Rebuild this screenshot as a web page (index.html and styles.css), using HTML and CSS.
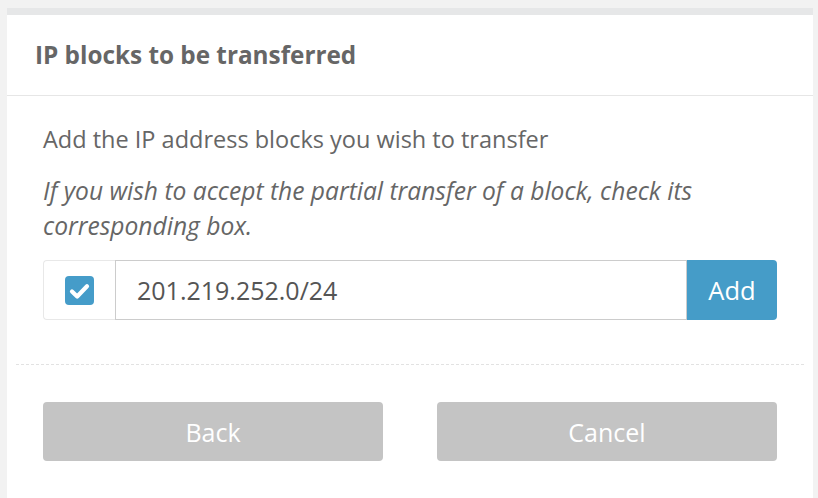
FILE: index.html
```html
<!DOCTYPE html>
<html lang="en">
<head>
<meta charset="utf-8">
<title>IP blocks to be transferred</title>
<link rel="stylesheet" href="styles.css">
</head>
<body>
<div class="page">
  <div class="card">
    <div class="card-header">
      <h2 class="title">IP blocks to be transferred</h2>
    </div>
    <div class="card-body">
      <p class="lead">Add the IP address blocks you wish to transfer</p>
      <p class="hint">If you wish to accept the partial transfer of a block, check its corresponding box.</p>
      <div class="input-group">
        <span class="addon">
          <span class="check">
            <svg viewBox="0 0 29 29" width="29" height="29"><path d="M7 15.5 L12.2 20.5 L22 10.2" fill="none" stroke="#fff" stroke-width="4.2" stroke-linecap="round" stroke-linejoin="round"/></svg>
          </span>
        </span>
        <input class="field" type="text" value="201.219.252.0/24">
        <button class="btn-add" type="button">Add</button>
      </div>
    </div>
    <hr class="divider">
    <div class="card-footer">
      <button class="btn-grey" type="button">Back</button>
      <button class="btn-grey" type="button">Cancel</button>
    </div>
  </div>
</div>
</body>
</html>
```
FILE: styles.css
```css
html, body {
  margin: 0;
  padding: 0;
  background: #f2f2f2;
  font-family: "Open Sans", "Noto Sans", sans-serif;
  height: 100%;
  overflow: hidden;
}
.page {
  padding: 8px 5px 0 7px;
}
.card {
  background: #fff;
  border-top: 7px solid #e6e7e8;
  min-height: 500px;
}
.card-header {
  height: 80px;
  display: flex;
  align-items: center;
  padding: 0 28px;
  border-bottom: 1px solid #e6e6e6;
}
.title {
  margin: 0;
  font-size: 24.3px;
  font-weight: 700;
  color: #666;
  line-height: 1;
}
.card-body {
  padding: 26px 36px 0;
}
.lead {
  margin: 0;
  font-size: 23.5px;
  line-height: 35px;
  color: #666;
}
.hint {
  margin: 16px 0 0;
  font-size: 24.6px;
  line-height: 35px;
  font-style: italic;
  color: #666;
}
.input-group {
  display: flex;
  height: 60px;
  margin-top: 17px;
}
.addon {
  width: 72px;
  box-sizing: border-box;
  border: 1px solid #e8e8e8;
  border-right: none;
  border-radius: 4px 0 0 4px;
  display: flex;
  align-items: center;
  justify-content: center;
}
.check {
  width: 29px;
  height: 29px;
  border-radius: 4px;
  background: #459cc9;
  display: flex;
}
.field {
  flex: 1;
  box-sizing: border-box;
  border: 1px solid #cccccc;
  margin: 0;
  padding: 0 21px;
  font-family: inherit;
  font-size: 25px;
  color: #555;
  outline: none;
  height: 60px;
}
.btn-add {
  width: 90px;
  border: none;
  border-radius: 0 4px 4px 0;
  background: #459cc8;
  color: #fff;
  font-family: inherit;
  font-size: 25.5px;
  padding: 0;
  margin: 0;
}
.divider {
  margin: 44px 9px 0;
  border: none;
  border-top: 1px dashed #e2e2e2;
  height: 0;
}
.card-footer {
  display: flex;
  justify-content: space-between;
  padding: 37px 36px 0;
}
.btn-grey {
  width: 340px;
  height: 59px;
  border: none;
  border-radius: 4px;
  background: #c4c4c4;
  color: #fff;
  font-family: inherit;
  font-size: 25px;
  padding: 0;
}
```
